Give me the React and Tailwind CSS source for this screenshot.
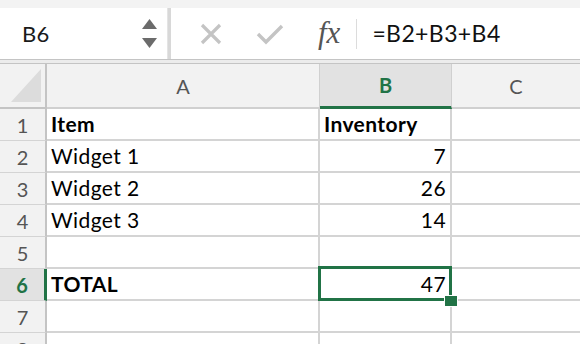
const font = { fontFamily: 'Lato, "Open Sans", sans-serif' }

const ROWS = [
  { n: 1, a: 'Item', b: 'Inventory', bold: true },
  { n: 2, a: 'Widget 1', b: '7' },
  { n: 3, a: 'Widget 2', b: '26' },
  { n: 4, a: 'Widget 3', b: '14' },
  { n: 5, a: '', b: '' },
  { n: 6, a: 'TOTAL', b: '47', bold: true, selected: true },
  { n: 7, a: '', b: '' },
  { n: 8, a: '', b: '' },
]

function FormulaBar() {
  return (
    <div className="bg-[#f3f3f3] pt-2">
      <div className="flex h-[52px] bg-white border-b border-[#c4c4c4]">
        <div className="flex w-[168px] items-center justify-between pl-[22px] pr-[10px] border-r border-[#e4e4e4]">
          <span className="text-[22px] tracking-[0.3px] text-[#1a1a1a]">B6</span>
          <div className="flex flex-col gap-[9px]">
            <svg width="15" height="10" viewBox="0 0 15 10"><path d="M7.5 0 L15 10 L0 10 Z" fill="#6b6b6b" /></svg>
            <svg width="15" height="10" viewBox="0 0 15 10"><path d="M0 0 L15 0 L7.5 10 Z" fill="#6b6b6b" /></svg>
          </div>
        </div>
        <div className="w-[3px] bg-[#d8d8d8]" />
        <div className="flex flex-1 items-center">
          <svg className="ml-[29px]" width="22" height="22" viewBox="0 0 22 22">
            <path d="M2 2 L20 20 M20 2 L2 20" stroke="#c4c4c4" strokeWidth="3.2" />
          </svg>
          <svg className="ml-[34px]" width="28" height="22" viewBox="0 0 28 22">
            <path d="M2 11 L10 19 L26 3" stroke="#c4c4c4" strokeWidth="3.4" fill="none" />
          </svg>
          <span className="ml-[34px] text-[31px] italic text-[#555] leading-none pb-[3px]" style={{ fontFamily: '"Liberation Serif", serif' }}>fx</span>
          <div className="ml-[16px] h-[30px] w-px bg-[#dcdcdc]" />
          <span className="ml-[15px] text-[23px] tracking-[0.4px] text-[#111]">=B2+B3+B4</span>
        </div>
      </div>
      <div className="h-[4px] bg-[#ececec] border-b border-[#c4c4c4]" />
    </div>
  )
}

export default function App() {
  return (
    <div className="w-[580px] h-[344px] overflow-hidden bg-white" style={font}>
      <FormulaBar />
      <div className="grid grid-cols-[47px_273px_132px_1fr]">
        <div className="h-[45px] bg-[#f2f2f2] border-r-2 border-b-2 border-[#c4c4c4] flex items-end justify-end pb-[5px] pr-[4px]">
          <svg width="30" height="33" viewBox="0 0 30 33"><path d="M30 0 L30 33 L0 33 Z" fill="#dcdcdc" /></svg>
        </div>
        <div className="h-[45px] bg-[#f2f2f2] border-r border-b-2 border-[#d0d0d0] flex items-center justify-center text-[20px] text-[#555]">A</div>
        <div className="h-[45px] bg-[#e2e2e2] border-r border-[#d0d0d0] border-b-[3px] border-b-[#217346] flex items-center justify-center text-[20px] font-bold text-[#217346]">B</div>
        <div className="h-[45px] bg-[#f2f2f2] border-b-2 border-[#d0d0d0] flex items-center justify-center text-[20px] text-[#555]">C</div>

        {ROWS.map(r => (
          <Row key={r.n} r={r} />
        ))}
      </div>
    </div>
  )
}

function Row({ r }) {
  const sel = r.selected
  return (
    <>
      <div
        className={`h-[32px] flex items-center justify-center text-[20px] border-b border-[#d4d4d4] ${
          sel
            ? 'bg-[#e2e2e2] text-[#217346] font-bold border-r-[3px] border-r-[#217346]'
            : 'bg-[#f2f2f2] text-[#555] border-r-2 border-r-[#c4c4c4]'
        }`}
      >
        {r.n}
      </div>
      <div className={`h-[32px] flex items-center pl-[4px] text-[21px] tracking-[0.4px] text-black border-r-2 border-b-2 border-[#d4d4d4] ${r.bold ? 'font-bold' : ''}`}>
        {r.a}
      </div>
      <div className={`relative h-[32px] flex items-center justify-end pr-[4px] text-[21px] tracking-[0.4px] text-black border-r-2 border-b-2 border-[#d4d4d4] ${r.n === 1 ? 'justify-start pl-[4px] font-bold' : ''} ${sel ? 'z-10' : ''}`}>
        {r.b}
        {sel && (
          <>
            <div className="absolute -left-[2px] -top-[3px] -right-[2px] -bottom-[2px] border-[3px] border-[#217346]" />
            <div className="absolute -right-[8px] -bottom-[8px] w-[14px] h-[12px] bg-[#217346] border border-white" />
          </>
        )}
      </div>
      <div className="h-[32px] border-b-2 border-[#d4d4d4]" />
    </>
  )
}
